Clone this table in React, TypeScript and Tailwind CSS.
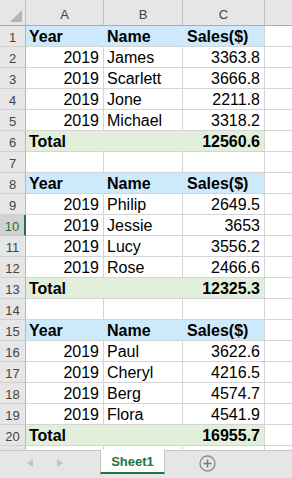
import React from "react";

type Row =
  | { kind: "head" }
  | { kind: "data"; name: string; sales: string }
  | { kind: "total"; value: string }
  | { kind: "blank" };

const blocks = [
  {
    people: [
      ["James", "3363.8"],
      ["Scarlett", "3666.8"],
      ["Jone", "2211.8"],
      ["Michael", "3318.2"],
    ],
    total: "12560.6",
  },
  {
    people: [
      ["Philip", "2649.5"],
      ["Jessie", "3653"],
      ["Lucy", "3556.2"],
      ["Rose", "2466.6"],
    ],
    total: "12325.3",
  },
  {
    people: [
      ["Paul", "3622.6"],
      ["Cheryl", "4216.5"],
      ["Berg", "4574.7"],
      ["Flora", "4541.9"],
    ],
    total: "16955.7",
  },
];

const rows: Row[] = [];
blocks.forEach((b, i) => {
  if (i > 0) rows.push({ kind: "blank" });
  rows.push({ kind: "head" });
  b.people.forEach(([name, sales]) => rows.push({ kind: "data", name, sales }));
  rows.push({ kind: "total", value: b.total });
});

const ACTIVE_ROW = 10;

function RowHeader({ n, active }: { n: number; active: boolean }) {
  return (
    <div
      className={
        active
          ? "w-[26px] shrink-0 flex items-center justify-center pt-[2px] border-b border-[#c8c8c8] border-r-2 border-r-[#217346] bg-[#d2d2d2] text-[#217346] text-[13px]"
          : "w-[26px] shrink-0 flex items-center justify-center pt-[2px] border-b border-[#d0d0d0] border-r border-r-[#b8b8b8] bg-[#e6e6e6] text-[#444] text-[13px]"
      }
    >
      {n}
    </div>
  );
}

function SheetRow({ row, n }: { row: Row; n: number }) {
  const base = "shrink-0 flex items-center border-b border-[#d4d4d4] pt-[2px]";
  let a: React.ReactNode = null;
  let b: React.ReactNode = null;
  let c: React.ReactNode = null;
  let fill = "";
  let sep = "border-r border-r-[#d4d4d4]";
  let aAlign = "justify-end pr-[4px]";
  let cAlign = "justify-end pr-[4px]";

  if (row.kind === "head") {
    fill = "bg-[#cde9fc] font-bold";
    sep = "border-r border-r-[#cde9fc]";
    aAlign = "justify-start pl-[3px]";
    cAlign = "justify-start pl-[4px]";
    a = "Year";
    b = "Name";
    c = "Sales($)";
  } else if (row.kind === "data") {
    a = "2019";
    b = row.name;
    c = row.sales;
  } else if (row.kind === "total") {
    fill = "bg-[#e2efda] font-bold";
    sep = "border-r border-r-[#e2efda]";
    aAlign = "justify-start pl-[3px]";
    a = "Total";
    c = row.value;
  }

  return (
    <div className="flex h-[21px]">
      <RowHeader n={n} active={n === ACTIVE_ROW} />
      <div className={`${base} ${fill} ${sep} ${aAlign} w-[78px]`}>{a}</div>
      <div className={`${base} ${fill} ${sep} justify-start pl-[3px] w-[79px]`}>{b}</div>
      <div className={`${base} ${fill} border-r border-r-[#d4d4d4] ${cAlign} w-[82px]`}>{c}</div>
      <div className="flex-1 border-b border-[#d4d4d4]" />
    </div>
  );
}

export default function App() {
  return (
    <div className="w-[292px] h-[478px] flex flex-col overflow-hidden bg-white text-black font-['Liberation_Sans',Arial,sans-serif] text-[16px] leading-none">
      <div className="flex-1 overflow-hidden">
        {/* column headers */}
        <div className="flex h-[26px] bg-[#e6e6e6] border-b border-[#ababab] text-[13px] text-[#444]">
          <div className="relative w-[26px] shrink-0 border-r border-[#c0c0c0]">
            <svg className="absolute left-[10px] top-[10px]" width="12" height="12" viewBox="0 0 12 12">
              <polygon points="12,0 12,12 0,12" fill="#b4b4b4" />
            </svg>
          </div>
          {["A", "B", "C"].map((l, i) => (
            <div
              key={l}
              className={`shrink-0 flex items-end justify-center pb-[4px] border-r border-[#c0c0c0] ${
                i === 0 ? "w-[78px]" : i === 1 ? "w-[79px]" : "w-[82px]"
              }`}
            >
              {l}
            </div>
          ))}
          <div className="flex-1" />
        </div>
        {rows.map((r, i) => (
          <SheetRow key={i} row={r} n={i + 1} />
        ))}
        <div className="flex h-[21px]">
          <div className="w-[26px] shrink-0 bg-[#e6e6e6] border-r border-[#b8b8b8]" />
          <div className="w-[78px] shrink-0 border-r border-[#d4d4d4]" />
          <div className="w-[79px] shrink-0 border-r border-[#d4d4d4]" />
          <div className="w-[82px] shrink-0 border-r border-[#d4d4d4]" />
        </div>
      </div>

      {/* sheet tabs */}
      <div className="h-[28px] shrink-0 flex items-start bg-[#e6e6e6] border-t border-[#c6c6c6]">
        <div className="w-[100px] shrink-0 flex items-center h-[24px] pl-[27px] gap-[24px]">
          <svg width="6" height="8" viewBox="0 0 6 8">
            <polygon points="6,0 6,8 0,4" fill="#c4c4c4" />
          </svg>
          <svg width="6" height="8" viewBox="0 0 6 8">
            <polygon points="0,0 0,8 6,4" fill="#c4c4c4" />
          </svg>
        </div>
        <div className="-mt-px w-[65px] h-[24px] shrink-0 bg-white border-x border-[#c6c6c6] border-b-2 border-b-[#217346] flex items-center justify-center text-[13px] font-bold text-[#217346]">
          Sheet1
        </div>
        <div className="ml-[34px] h-[24px] flex items-center">
          <svg width="17" height="17" viewBox="0 0 17 17">
            <circle cx="8.5" cy="8.5" r="7.5" fill="none" stroke="#8a8a8a" strokeWidth="1.3" />
            <line x1="8.5" y1="4.5" x2="8.5" y2="12.5" stroke="#7a7a7a" strokeWidth="1.5" />
            <line x1="4.5" y1="8.5" x2="12.5" y2="8.5" stroke="#7a7a7a" strokeWidth="1.5" />
          </svg>
        </div>
      </div>
    </div>
  );
}
